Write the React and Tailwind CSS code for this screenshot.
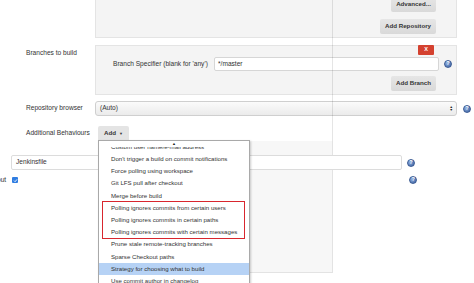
import React from "react";

function Help() {
  return (
    <div className="w-[8px] h-[8px] rounded-full bg-[radial-gradient(circle_at_35%_35%,#8fb0e0,#3b5f9e)] border border-[#3a5a94] flex items-center justify-center text-white font-bold text-[5.5px] leading-none shrink-0">
      ?
    </div>
  );
}

function Btn({ children, className = "" }) {
  return (
    <div className={"h-[15px] rounded-[2px] bg-[linear-gradient(#e6e6e6,#d9d9d9)] flex items-center justify-center text-[#333] font-bold text-[6.2px] leading-none " + className}>
      {children}
    </div>
  );
}

const items = [
  "Custom user name/e-mail address",
  "Don't trigger a build on commit notifications",
  "Force polling using workspace",
  "Git LFS pull after checkout",
  "Merge before build",
];
const boxed = [
  "Polling ignores commits from certain users",
  "Polling ignores commits in certain paths",
  "Polling ignores commits with certain messages",
];
const rest = [
  "Prune stale remote-tracking branches",
  "Sparse Checkout paths",
  "Strategy for choosing what to build",
  "Use commit author in changelog",
];

function Item({ children, active, first }) {
  return (
    <div
      className={
        "h-[12.2px] shrink-0 flex items-center pl-[12px] whitespace-nowrap text-[6.1px] leading-none text-[#333] " +
        (active ? "bg-[#b6d2f5] " : "") +
        (first ? "mt-[-6.2px] " : "")
      }
    >
      {children}
    </div>
  );
}

export default function App() {
  return (
    <div className="relative w-[474px] h-[283px] overflow-hidden bg-white font-['Liberation_Sans',Arial,sans-serif] text-[#333]">
      {/* faint background column */}
      <div className="absolute left-[250px] top-[141px] w-[83px] h-[132px] bg-[#f7f7f7] border-r border-b border-[#e3e3e3]" />

      <div className="relative flex flex-col">
        {/* top repository panel */}
        <div className="flex pl-[95px]">
          <div className="w-[362px] h-[38px] bg-[#f4f4f4] border-l border-r border-b border-[#e4e4e4] flex flex-col items-end pr-[20px]">
            <Btn className="w-[45px] mt-[-3px]">Advanced...</Btn>
            <Btn className="w-[56px] mt-[7px]">Add Repository</Btn>
          </div>
        </div>

        {/* branches to build */}
        <div className="flex mt-[7px]">
          <div className="w-[95px] shrink-0 pl-[26px] pt-[4px] text-[6.6px] leading-[8px] whitespace-nowrap">
            Branches to build
          </div>
          <div className="w-[362px] h-[50px] bg-[#f4f4f4] border border-[#e4e4e4] flex flex-col">
            <div className="flex justify-end pr-[22px] mt-[-1px]">
              <div className="w-[16px] h-[10px] bg-[#d4412f] rounded-[1px] flex items-center justify-center text-white font-bold text-[5.5px] leading-none">
                X
              </div>
            </div>
            <div className="flex items-center mt-[2px] pl-[17px]">
              <div className="w-[101px] text-[6.6px] leading-none whitespace-nowrap">
                Branch Specifier (blank for 'any')
              </div>
              <div className="w-[225px] h-[14px] bg-white border border-[#d6d6d6] rounded-[2px] flex items-center pl-[3px] text-[6.6px] leading-none">
                */master
              </div>
              <div className="ml-[5px]">
                <Help />
              </div>
            </div>
            <div className="flex justify-end pr-[20px] mt-[5px]">
              <Btn className="w-[45px]">Add Branch</Btn>
            </div>
          </div>
        </div>

        {/* repository browser */}
        <div className="flex items-center mt-[6px]">
          <div className="w-[95px] shrink-0 pl-[26px] text-[6.6px] leading-none whitespace-nowrap">
            Repository browser
          </div>
          <div className="w-[362px] h-[15px] rounded-[3px] border border-[#cfcfcf] bg-[linear-gradient(#fbfbfb,#ebebeb)] flex items-center justify-between pl-[4px] pr-[3px] text-[6.6px] leading-none">
            <span>(Auto)</span>
            <span className="flex flex-col items-center text-[3.5px] leading-[3px] text-[#222]">
              <span>▲</span>
              <span>▼</span>
            </span>
          </div>
          <div className="ml-[6px]">
            <Help />
          </div>
        </div>

        {/* additional behaviours */}
        <div className="flex items-center mt-[10px]">
          <div className="w-[98px] shrink-0 pl-[26px] text-[6.6px] leading-none whitespace-nowrap">
            Additional Behaviours
          </div>
          <div className="w-[31px] h-[15px] bg-[#e4e4e4] rounded-t-[2px] flex items-center justify-center gap-[3px] text-[6.2px] font-bold leading-none">
            <span>Add</span>
            <span className="text-[4px]">▼</span>
          </div>
        </div>

        {/* script path */}
        <div className="flex items-center mt-[14px]">
          <div className="ml-[11px] w-[391px] h-[15px] bg-white border border-[#dcdcdc] rounded-[2px] flex items-center pl-[4px] text-[6.6px] leading-none">
            Jenkinsfile
          </div>
          <div className="ml-[5px]">
            <Help />
          </div>
        </div>

        {/* lightweight checkout */}
        <div className="flex items-center mt-[5px] h-[10px]">
          <span className="ml-[-3px] text-[6.6px] leading-none">out</span>
          <div className="ml-[6px] w-[6px] h-[6px] rounded-[1px] bg-[#2f7de1] flex items-center justify-center">
            <svg width="5" height="5" viewBox="0 0 10 10">
              <path d="M2 5.2 L4.2 7.4 L8 2.8" stroke="white" strokeWidth="1.8" fill="none" />
            </svg>
          </div>
          <div className="ml-[391px]">
            <Help />
          </div>
        </div>
      </div>

      {/* faint vertical line */}
      <div className="absolute left-[332px] top-0 w-px h-[141px] bg-black/10" />

      {/* dropdown menu */}
      <div className="absolute left-[98px] top-[140px] w-[152px] h-[150px] bg-white border border-[#a9a9a9] shadow-[1px_1px_2px_rgba(0,0,0,0.2)] flex flex-col">
        <div className="h-[6px] shrink-0 flex items-center justify-center text-[4px] leading-none text-[#222]">
          ▲
        </div>
        <div className="flex-1 overflow-hidden flex flex-col">
          {items.map((t, i) => (
            <Item key={t} first={i === 0}>
              {t}
            </Item>
          ))}
          <div className="relative flex flex-col">
            {boxed.map((t) => (
              <Item key={t}>{t}</Item>
            ))}
            <div className="absolute left-[3px] right-[4px] top-[-1px] bottom-[-1px] border-[1.5px] border-[#d8262e]" />
          </div>
          {rest.map((t, i) => (
            <Item key={t} active={i === 2}>
              {t}
            </Item>
          ))}
        </div>
      </div>
    </div>
  );
}
